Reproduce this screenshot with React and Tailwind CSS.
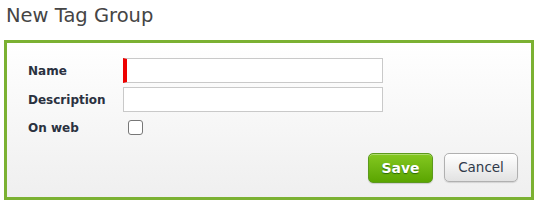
import { useState } from 'react';

const font = { fontFamily: '"DejaVu Sans", Verdana, sans-serif' };

const Field = ({ label, children }) => (
    <div className="flex items-center">
        <label className="w-[95px] shrink-0 text-[12px] font-bold text-[#2a3140]">{label}</label>
        {children}
    </div>
);

const App = () => {
    const [name, setName] = useState('');
    const [desc, setDesc] = useState('');
    const [onWeb, setOnWeb] = useState(false);

    return (
        <div className="w-[538px] h-[204px] bg-white" style={font}>
            <h1 className="pl-[6px] pt-[4px] h-[40px] text-[19.5px] leading-[24px] text-[#454545]">New Tag Group</h1>
            <div className="ml-[4px] w-[530px] h-[160px] border-[3px] border-[#7bb132] bg-gradient-to-b from-white to-[#efefef] pl-[21px] pr-[13px] pt-[15px]">
                <div className="flex flex-col gap-[4px]">
                    <Field label="Name">
                        <input
                            value={name}
                            onChange={(e) => setName(e.target.value)}
                            className="w-[260px] h-[25px] border border-[#c9c9c9] border-l-[4px] border-l-[#ee0000] bg-white outline-none px-1 text-[12px]"
                        />
                    </Field>
                    <Field label="Description">
                        <input
                            value={desc}
                            onChange={(e) => setDesc(e.target.value)}
                            className="w-[260px] h-[25px] border border-[#c9c9c9] bg-white outline-none px-1 text-[12px]"
                        />
                    </Field>
                    <div className="flex items-center h-[23px]">
                        <label className="w-[95px] shrink-0 text-[12px] font-bold text-[#2a3140]">On web</label>
                        <button
                            onClick={() => setOnWeb(!onWeb)}
                            className="ml-[5px] w-[15px] h-[15px] rounded-[3px] border border-[#777] bg-white flex items-center justify-center text-[11px] leading-none text-[#333]"
                        >
                            {onWeb ? '✓' : ''}
                        </button>
                    </div>
                </div>
                <div className="flex justify-end gap-[11px] mt-[14px]">
                    <button className="w-[65px] h-[30px] rounded-[5px] border border-[#5c9a1c] bg-gradient-to-b from-[#84c81f] to-[#5aa500] shadow-[inset_0_1px_0_rgba(255,255,255,0.35),0_1px_1px_rgba(0,0,0,0.15)] text-white text-[14px] font-bold [text-shadow:0_1px_1px_rgba(0,60,0,0.6)]">
                        Save
                    </button>
                    <button className="w-[74px] h-[29px] rounded-[5px] border border-[#b0b0b0] bg-gradient-to-b from-white to-[#e2e2e2] shadow-[0_1px_1px_rgba(0,0,0,0.12)] text-[#2f3a4a] text-[13.5px]">
                        Cancel
                    </button>
                </div>
            </div>
        </div>
    );
};

export default App;
